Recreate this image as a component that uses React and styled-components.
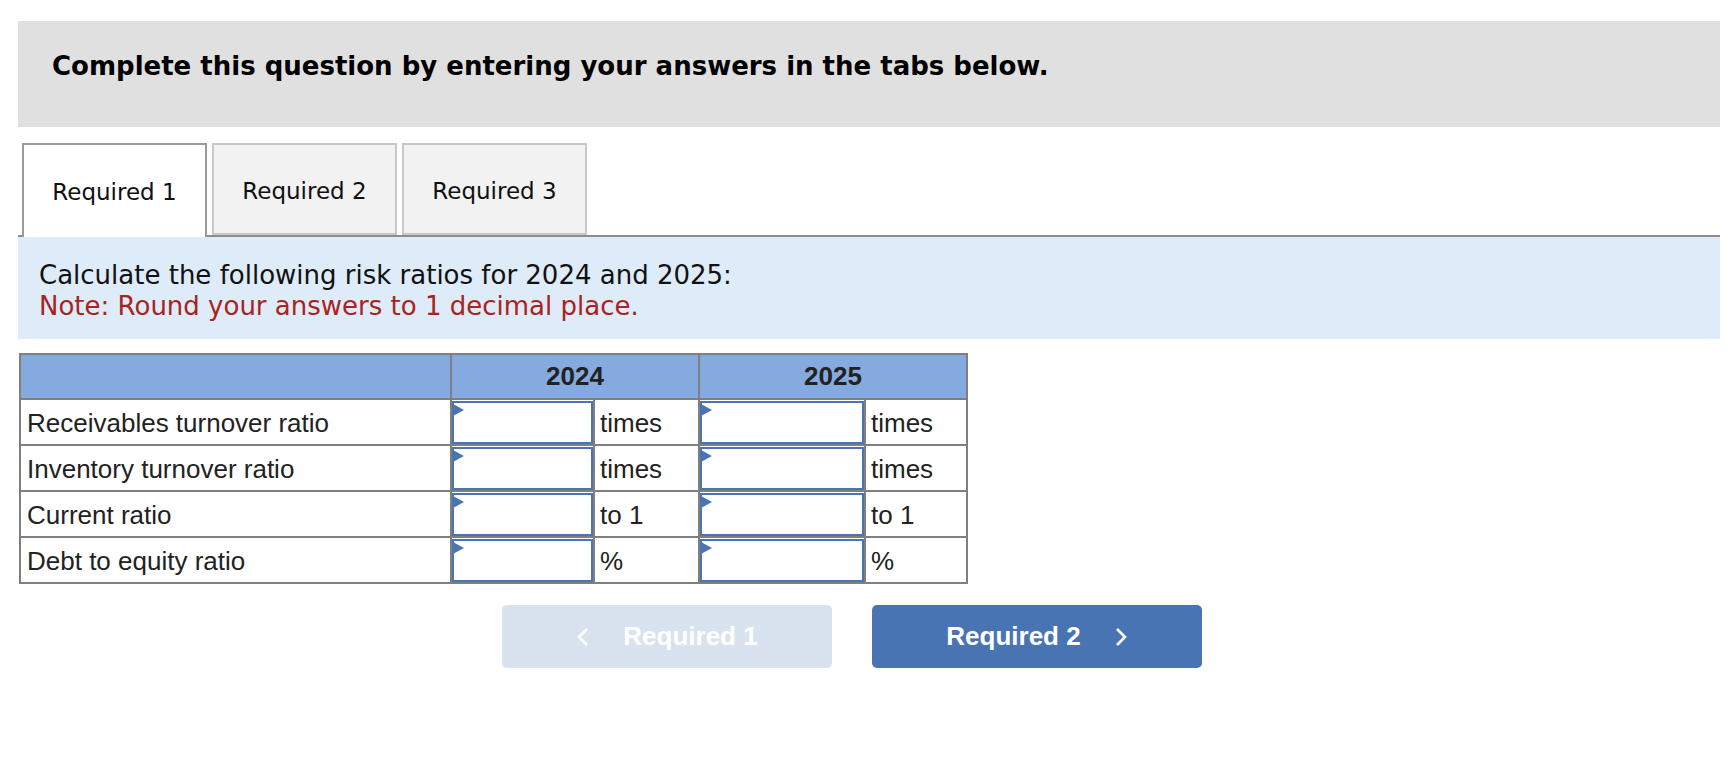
import React from 'react'
import styled, { createGlobalStyle } from 'styled-components'

const GlobalStyle = createGlobalStyle`
  * { box-sizing: border-box; }
  body {
    margin: 0;
    background: #fff;
    font-family: "DejaVu Sans", Verdana, sans-serif;
  }
`

const rows = [
  { label: 'Receivables turnover ratio', unit: 'times' },
  { label: 'Inventory turnover ratio', unit: 'times' },
  { label: 'Current ratio', unit: 'to 1' },
  { label: 'Debt to equity ratio', unit: '%' },
]

const Chevron = ({ dir }) => (
  <svg width="13" height="20" viewBox="0 0 13 20">
    <polyline
      points={dir === 'left' ? '11,2 3,10 11,18' : '2,2 10,10 2,18'}
      fill="none"
      stroke="#fff"
      strokeWidth="2.6"
    />
  </svg>
)

const App = () => {
  return (
    <>
      <GlobalStyle />
      <Page>
        <Banner>Complete this question by entering your answers in the tabs below.</Banner>

        <Tabbar>
          <Tab active>Required 1</Tab>
          <Tab>Required 2</Tab>
          <Tab>Required 3</Tab>
        </Tabbar>

        <Instructions>
          <div>Calculate the following risk ratios for 2024 and 2025:</div>
          <Note>Note: Round your answers to 1 decimal place.</Note>
        </Instructions>

        <Ratios>
          <colgroup>
            <col style={{ width: 431 }} />
            <col style={{ width: 143 }} />
            <col style={{ width: 105 }} />
            <col style={{ width: 166 }} />
            <col style={{ width: 102 }} />
          </colgroup>
          <thead>
            <tr>
              <Th></Th>
              <Th colSpan={2}>2024</Th>
              <Th colSpan={2}>2025</Th>
            </tr>
          </thead>
          <tbody>
            {rows.map((r) => (
              <tr key={r.label}>
                <LabelCell>{r.label}</LabelCell>
                <InputCell>
                  <Marker />
                  <Answer type="text" />
                </InputCell>
                <UnitCell>{r.unit}</UnitCell>
                <InputCell>
                  <Marker />
                  <Answer type="text" />
                </InputCell>
                <UnitCell>{r.unit}</UnitCell>
              </tr>
            ))}
          </tbody>
        </Ratios>

        <Navrow>
          <NavButton disabled>
            <Chevron dir="left" />
            Required 1
          </NavButton>
          <NavButton>
            Required 2
            <Chevron dir="right" />
          </NavButton>
        </Navrow>
      </Page>
    </>
  )
}

export default App

const Page = styled.div`
  padding: 21px 14px 40px 18px;
`

const Banner = styled.div`
  background-color: #e0e0e0;
  padding: 30px 34px 46px;
  font-size: 26px;
  line-height: 30px;
  font-weight: bold;
  color: #000;
`

const Tabbar = styled.div`
  display: flex;
  align-items: flex-end;
  gap: 5px;
  margin-top: 16px;
  padding-left: 4px;
  border-bottom: 2px solid #8c8c8c;
`

const Tab = styled.div`
  width: 185px;
  height: ${(p) => (p.active ? '94px' : '92px')};
  margin-bottom: ${(p) => (p.active ? '-2px' : '0')};
  display: flex;
  align-items: center;
  justify-content: center;
  padding-top: 4px;
  padding-bottom: ${(p) => (p.active ? '2px' : '0')};
  background-color: ${(p) => (p.active ? '#fff' : '#f2f2f2')};
  border: 2px solid ${(p) => (p.active ? '#999' : '#c8c8c8')};
  border-bottom: ${(p) => (p.active ? 'none' : '2px solid #c8c8c8')};
  font-size: 23px;
  color: #111;
`

const Instructions = styled.div`
  background-color: #deebf8;
  padding: 23px 21px 17px;
  font-size: 26px;
  line-height: 31px;
  color: #111;
`

const Note = styled.div`
  color: #a8231f;
`

const Ratios = styled.table`
  margin-top: 14px;
  margin-left: 1px;
  width: 947px;
  table-layout: fixed;
  border-collapse: collapse;
  font-family: "Liberation Sans", Arial, sans-serif;
  font-size: 26px;
  color: #222;
`

const Th = styled.th`
  height: 45px;
  padding: 0;
  background-color: #84aadf;
  border: 2px solid #7f7f7f;
  font-weight: bold;
  text-align: center;
  vertical-align: middle;
`

const LabelCell = styled.td`
  height: 46px;
  padding: 3px 6px 0;
  border: 2px solid #7f7f7f;
  vertical-align: middle;
  white-space: nowrap;
`

const UnitCell = styled(LabelCell)`
  padding-left: 5px;
`

const InputCell = styled.td`
  position: relative;
  height: 46px;
  padding: 0;
  border: 2px solid #7f7f7f;
`

const Answer = styled.input`
  display: block;
  width: 100%;
  height: 43px;
  margin: 0;
  border: 2px solid #4a74b4;
  background: #fff;
  outline: none;
  font-size: 24px;
`

const Marker = styled.span`
  position: absolute;
  top: 4px;
  left: 1px;
  width: 0;
  height: 0;
  border-top: 6px solid transparent;
  border-bottom: 6px solid transparent;
  border-left: 11px solid #4a74b4;
`

const Navrow = styled.div`
  display: flex;
  gap: 40px;
  margin-top: 21px;
  padding-left: 484px;
`

const NavButton = styled.button`
  width: 330px;
  height: 63px;
  display: flex;
  align-items: center;
  justify-content: center;
  gap: 34px;
  border: none;
  border-radius: 5px;
  background-color: ${(p) => (p.disabled ? '#d9e3ef' : '#4874b4')};
  color: #fff;
  font-family: "Liberation Sans", Arial, sans-serif;
  font-size: 26px;
  font-weight: bold;
  cursor: ${(p) => (p.disabled ? 'default' : 'pointer')};
`
